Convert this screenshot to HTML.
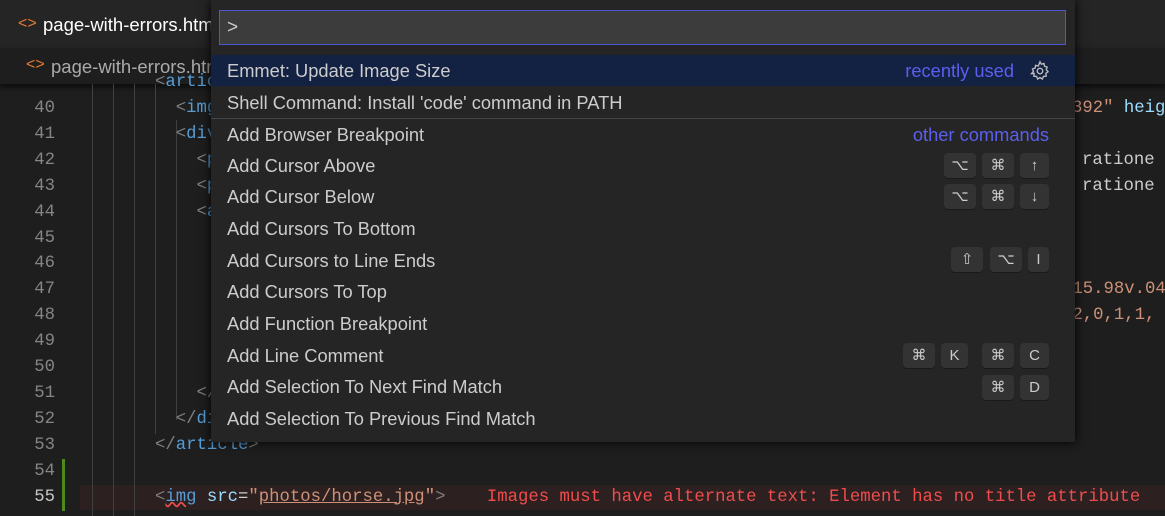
<!DOCTYPE html>
<html><head><style>
body{margin:0;width:1165px;height:516px;background:#1e1e1e;overflow:hidden;position:relative;font-family:"Liberation Sans",sans-serif}
.abs{position:absolute}
.tabbar{left:0;top:0;width:1165px;height:48px;background:#252526}
.crumb{left:0;top:48px;width:1165px;height:36px;background:#1e1e1e;box-shadow:0 3px 6px #000a}
.mono{font-family:"Liberation Mono",monospace;font-size:17.3px;white-space:pre}
.ln{color:#858585;width:55px;text-align:right;left:0}
.pal{left:211px;top:0;width:864px;height:442px;background:#252526;box-shadow:0 0 10px #000}
.row{position:absolute;left:16px;font-size:18.3px;color:#ccc}
.key{position:absolute;height:25px;background:#333;border-radius:4px;color:#ccc;font-size:15px;text-align:center;line-height:25px;box-shadow:0 1px 0 #1a1a1a}
.g{position:absolute;width:1px;background:#404040}
</style></head><body>
<div class="abs tabbar"></div>
<div class="abs" style="left:18px;top:15px;color:#e37933;font-size:16px">&lt;&gt;</div>
<div class="abs" style="left:43px;top:14px;color:#fff;font-size:18.5px">page-with-errors.html</div>
<div class="abs crumb"></div>
<div class="abs" style="left:26px;top:56px;color:#e37933;font-size:16px">&lt;&gt;</div>
<div class="abs" style="left:51px;top:56px;color:#aaa;font-size:18.5px">page-with-errors.html</div>

<div class="abs" style="left:80px;top:485px;width:1085px;height:25px;background:#2c2020"></div>
<div class="abs" style="left:62px;top:459px;width:3px;height:52px;background:#4e8a1a"></div>
<div class="g" style="left:92px;top:84px;height:432px"></div>
<div class="g" style="left:113px;top:84px;height:432px"></div>
<div class="g" style="left:134px;top:84px;height:432px"></div>
<div class="g" style="left:155px;top:84px;height:350px"></div>
<div class="g" style="left:176px;top:120px;height:300px"></div>

<div class="abs mono ln" style="top:96px;line-height:25.9px">40
41
42
43
44
45
46
47
48
49
50
51
52
53
54
<span style="color:#c6c6c6">55</span></div>
<div class="abs mono" style="left:155px;top:70px;line-height:25.9px;color:#808080"><span>&lt;<span style="color:#569cd6">artic</span></span>
  &lt;<span style="color:#569cd6">img</span>
  &lt;<span style="color:#569cd6">div</span>
    &lt;<span style="color:#569cd6">p</span>
    &lt;<span style="color:#569cd6">p</span>
    &lt;<span style="color:#569cd6">a</span>






    &lt;/
  &lt;/<span style="color:#569cd6">di</span>
&lt;/<span style="color:#569cd6">article</span>&gt;

&lt;<span style="color:#569cd6;text-decoration:underline wavy #f14c4c">img</span> <span style="color:#9cdcfe">src</span><span style="color:#ccc">=</span><span style="color:#ce9178">"<u>photos/horse.jpg</u>"</span>&gt;    <span style="color:#f14c4c">Images must have alternate text: Element has no title attribute</span></div>
<div class="abs mono" style="left:1072px;top:96px;line-height:25.9px"><span style="color:#ce9178">392"</span> <span style="color:#9cdcfe">heig</span></div>
<div class="abs mono" style="left:1082px;top:148px;line-height:25.9px;color:#ccc">ratione .
ratione .</div>
<div class="abs mono" style="left:1062px;top:277px;line-height:25.9px;color:#ce9178">,15.98v.04
12,0,1,1,</div>

<div class="abs pal">
  <div style="position:absolute;left:8px;top:10px;width:838px;height:33px;border:1px solid #4d56d6;background:#3c3c3c;color:#ccc;font-size:19px;line-height:33px;padding-left:7px">&gt;</div>
  <div style="position:absolute;left:0;top:55px;width:864px;height:31px;background:#132143"></div>
  <div style="position:absolute;left:0;top:118px;width:864px;height:1px;background:#444"></div>
  <div class="row" style="top:60px">Emmet: Update Image Size</div>
  <div class="row" style="top:92px">Shell Command: Install 'code' command in PATH</div>
  <div class="row" style="top:124px">Add Browser Breakpoint</div>
  <div class="row" style="top:155px">Add Cursor Above</div>
  <div class="row" style="top:186px">Add Cursor Below</div>
  <div class="row" style="top:218px">Add Cursors To Bottom</div>
  <div class="row" style="top:250px">Add Cursors to Line Ends</div>
  <div class="row" style="top:281px">Add Cursors To Top</div>
  <div class="row" style="top:313px">Add Function Breakpoint</div>
  <div class="row" style="top:345px">Add Line Comment</div>
  <div class="row" style="top:376px">Add Selection To Next Find Match</div>
  <div class="row" style="top:408px">Add Selection To Previous Find Match</div>
  <div style="position:absolute;right:61px;top:60px;color:#5b5ff0;font-size:18.3px">recently used</div>
  <svg style="position:absolute;left:818px;top:60px" width="22" height="22" viewBox="0 0 24 24" fill="none" stroke="#bbb" stroke-width="1.5"><circle cx="12" cy="12" r="3"/><path d="M12 2l1.5 2.6 2.9-.8.5 3 2.9.9-1 2.8 2 2.3-2.4 1.8.4 3-3 .3-1.2 2.8-2.6-1.5-2.6 1.5-1.2-2.8-3-.3.4-3L2.8 14.8l2-2.3-1-2.8 2.9-.9.5-3 2.9.8z"/></svg>
  <div style="position:absolute;right:26px;top:124px;color:#5b5ff0;font-size:18.3px">other commands</div>
  <div class="key" style="left:733px;top:153px;width:32px">⌥</div>
  <div class="key" style="left:771px;top:153px;width:32px">⌘</div>
  <div class="key" style="left:809px;top:153px;width:29px">↑</div>
  <div class="key" style="left:733px;top:184px;width:32px">⌥</div>
  <div class="key" style="left:771px;top:184px;width:32px">⌘</div>
  <div class="key" style="left:809px;top:184px;width:29px">↓</div>
  <div class="key" style="left:740px;top:247px;width:32px">⇧</div>
  <div class="key" style="left:779px;top:247px;width:32px">⌥</div>
  <div class="key" style="left:817px;top:247px;width:21px">I</div>
  <div class="key" style="left:692px;top:343px;width:32px">⌘</div>
  <div class="key" style="left:730px;top:343px;width:27px">K</div>
  <div class="key" style="left:771px;top:343px;width:32px">⌘</div>
  <div class="key" style="left:809px;top:343px;width:29px">C</div>
  <div class="key" style="left:771px;top:375px;width:32px">⌘</div>
  <div class="key" style="left:809px;top:375px;width:29px">D</div>
</div>
</body></html>
